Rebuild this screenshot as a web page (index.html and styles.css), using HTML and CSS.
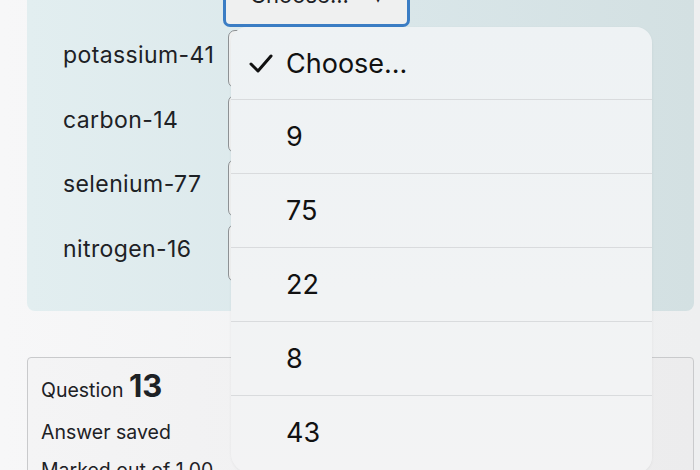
FILE: index.html
```html
<!DOCTYPE html>
<html lang="en">
<head>
<meta charset="utf-8">
<title>Matching question</title>
<link rel="stylesheet" href="styles.css">
</head>
<body>
<div class="page">
  <div class="panel">
    <div class="row row-top">
      <div class="label"></div>
      <div class="select focused"><span>Choose...</span><span class="caret">&#9662;</span></div>
    </div>
    <div class="row">
      <div class="label">potassium-41</div>
      <div class="select"><span>Choose...</span></div>
    </div>
    <div class="row">
      <div class="label">carbon-14</div>
      <div class="select"><span>Choose...</span></div>
    </div>
    <div class="row">
      <div class="label">selenium-77</div>
      <div class="select"><span>Choose...</span></div>
    </div>
    <div class="row">
      <div class="label">nitrogen-16</div>
      <div class="select"><span>Choose...</span></div>
    </div>
  </div>

  <div class="question">
    <div class="qno">Question <b>13</b></div>
    <div class="state">Answer saved</div>
    <div class="grade">Marked out of 1.00</div>
  </div>

  <div class="picker">
    <div class="opt selected">
      <svg class="check" width="24" height="20" viewBox="0 0 24 20"><polyline points="2,10 9,17 22,2" fill="none" stroke="#111" stroke-width="3" stroke-linecap="round" stroke-linejoin="round"/></svg>
      <span>Choose...</span>
    </div>
    <div class="opt"><span>9</span></div>
    <div class="opt"><span>75</span></div>
    <div class="opt"><span>22</span></div>
    <div class="opt"><span>8</span></div>
    <div class="opt"><span>43</span></div>
  </div>
</div>
</body>
</html>
```

FILE: styles.css
```css
html, body {
  margin: 0;
  padding: 0;
  height: 470px;
  overflow: hidden;
}
body {
  background: linear-gradient(90deg, #f7f7f8 0%, #f1f2f3 60%, #eeeff0 100%);
  font-family: "Inter", "Noto Sans", sans-serif;
  color: #1d2125;
}
.page {
  position: relative;
  display: flow-root;
  padding: 0 6px 0 27px;
}
.panel {
  margin-top: -45px;
  padding: 14px 0 29px 0;
  background: linear-gradient(90deg, #e2eef0 0%, #dae7ea 50%, #d3e0e2 100%);
  border-radius: 0 0 8px 8px;
  display: flex;
  flex-direction: column;
  gap: 6.5px;
}
.row {
  display: flex;
  height: 58px;
}
.row-top {
  margin-bottom: -3.5px;
}
.label {
  flex: none;
  width: 201px;
  padding: 12px 0 0 36px;
  box-sizing: border-box;
  font-size: 23px;
  line-height: 26px;
  letter-spacing: 0.4px;
  white-space: nowrap;
}
.select {
  flex: none;
  width: 178px;
  height: 58px;
  box-sizing: border-box;
  border: 1px solid #8d9194;
  border-radius: 7px;
  background: #f0f1f1;
  font-size: 22px;
  display: flex;
  align-items: center;
  justify-content: space-between;
  padding: 0 18px 0 20px;
}
.select.focused {
  border: 3px solid #3b7dc4;
  margin-left: -5px;
  width: 187px;
  height: 58px;
  background: #eff0f0;
  align-items: flex-end;
  padding: 0 24px 16px 24px;
}
.caret {
  font-size: 20px;
}
.question {
  margin-top: 46px;
  height: 140px;
  border: 1px solid #c9cacc;
  border-radius: 4px;
  background: linear-gradient(90deg, #f4f4f5 0%, #ececed 100%);
  padding: 12px 13px;
}
.qno {
  font-size: 19.5px;
  line-height: 32px;
}
.qno b {
  font-size: 31px;
  font-weight: 700;
}
.state {
  font-size: 19.5px;
  line-height: 24px;
  margin-top: 14px;
}
.grade {
  font-size: 19.5px;
  line-height: 24px;
  margin-top: 14px;
}
.picker {
  position: absolute;
  left: 231px;
  top: 27px;
  width: 421px;
  height: 446px;
  border-radius: 16px 16px 16px 20px;
  background: linear-gradient(180deg, #eef2f4 0%, #f1f3f4 60%, #f3f3f4 100%);
  overflow: hidden;
  box-shadow: 0 1px 3px rgba(0,0,0,0.06);
}
.opt {
  height: 73px;
  border-bottom: 1px solid #d9dbdd;
  display: flex;
  align-items: center;
  padding-left: 55px;
  font-size: 27px;
  color: #111;
  position: relative;
}
.opt:first-child {
  height: 72px;
}
.opt:last-child {
  border-bottom: none;
}
.check {
  position: absolute;
  left: 18px;
  top: 27px;
}
```
